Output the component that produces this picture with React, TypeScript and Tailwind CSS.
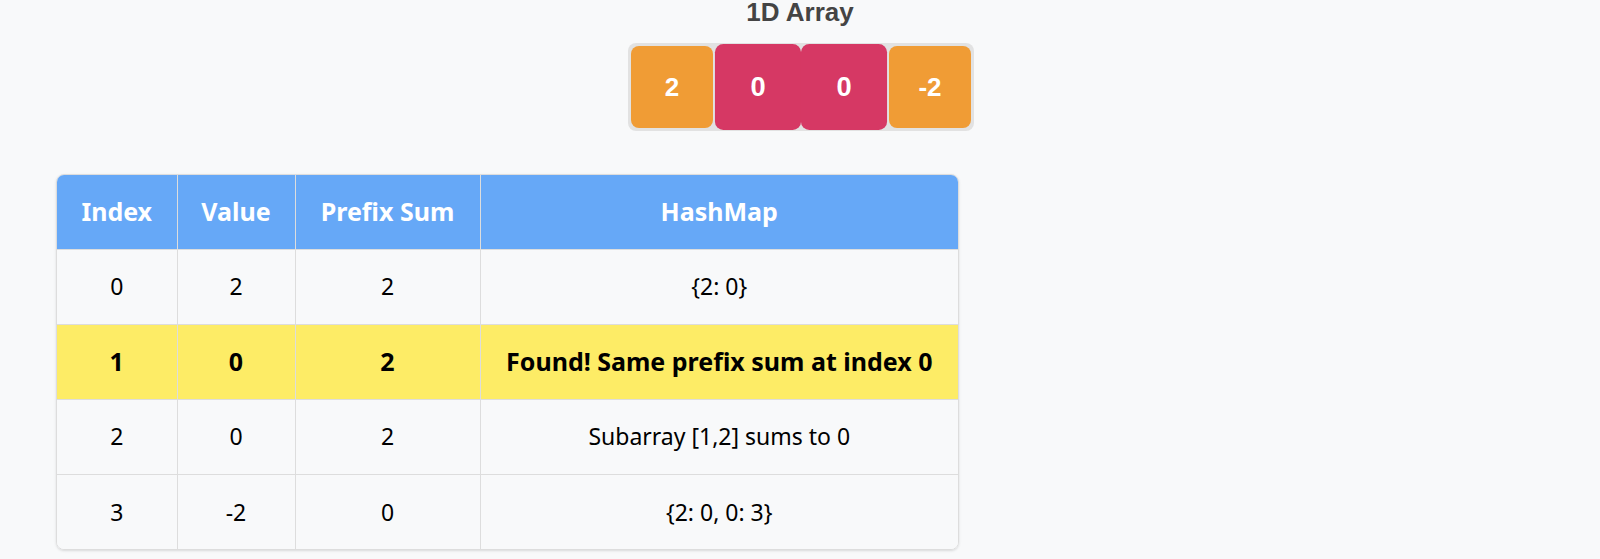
import React from "react";

const cells = [
  { v: "2", hot: false },
  { v: "0", hot: true },
  { v: "0", hot: true },
  { v: "-2", hot: false },
];

const rows = [
  { i: "0", v: "2", p: "2", h: "{2: 0}", hl: false },
  { i: "1", v: "0", p: "2", h: "Found! Same prefix sum at index 0", hl: true },
  { i: "2", v: "0", p: "2", h: "Subarray [1,2] sums to 0", hl: false },
  { i: "3", v: "-2", p: "0", h: "{2: 0, 0: 3}", hl: false },
];

export default function App() {
  return (
    <div
      className="w-[1600px] h-[559px] overflow-hidden bg-[#f8f9fa]"
      style={{ fontFamily: '"Noto Sans", "Open Sans", sans-serif' }}
    >
      <div className="flex flex-col items-center">
        <div
          className="h-[24px] leading-[24px] text-[26px] font-bold text-[#444444]"
          style={{ fontFamily: '"Liberation Sans", Arial, sans-serif' }}
        >
          1D Array
        </div>
        <div className="mt-[19px] flex gap-[4px] rounded-[8px] bg-[#e2e2e2] p-[3px] ml-[2px]">
          {cells.map((c, k) => (
            <div
              key={k}
              className={
                "flex h-[82px] w-[82px] items-center justify-center rounded-[8px] text-[26px] font-bold text-white " +
                (c.hot ? "bg-[#d63864] scale-[1.05]" : "bg-[#f09c35]")
              }
              style={{ fontFamily: '"Liberation Sans", Arial, sans-serif' }}
            >
              {c.v}
            </div>
          ))}
        </div>
      </div>
      <div className="ml-[56px] mt-[43px] w-[903px] overflow-hidden rounded-[8px] border border-[#dddddd] shadow-sm">
        <table className="w-full border-collapse text-center">
          <thead>
            <tr className="h-[74px] bg-[#66a8f7] text-white">
              <th className="w-[120px] border-r border-[#dddddd] text-[25px] font-bold">Index</th>
              <th className="w-[118px] border-r border-[#dddddd] text-[25px] font-bold">Value</th>
              <th className="w-[185px] border-r border-[#dddddd] text-[25px] font-bold">Prefix Sum</th>
              <th className="text-[25px] font-bold">HashMap</th>
            </tr>
          </thead>
          <tbody>
            {rows.map((r, k) => (
              <tr
                key={k}
                className={
                  "h-[75px] border-t border-[#dddddd] text-black " +
                  (r.hl ? "bg-[#fdec66] font-bold text-[25px]" : "bg-[#f8f9fa] text-[23px]")
                }
              >
                <td className="border-r border-[#dddddd]">{r.i}</td>
                <td className="border-r border-[#dddddd]">{r.v}</td>
                <td className="border-r border-[#dddddd]">{r.p}</td>
                <td>{r.h}</td>
              </tr>
            ))}
          </tbody>
        </table>
      </div>
    </div>
  );
}
